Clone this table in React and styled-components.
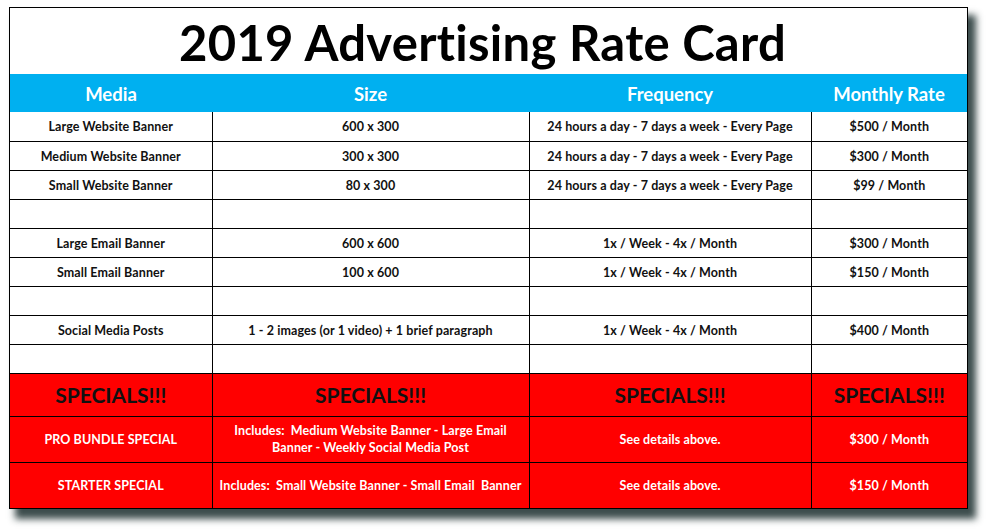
import styled, { createGlobalStyle } from 'styled-components';

const GlobalStyle = createGlobalStyle`
  html, body {
    margin: 0;
    padding: 0;
    background: #ffffff;
  }
  body {
    font-family: Lato, "Open Sans", sans-serif;
    color: #111111;
  }
`;

const rows = [
  ['Large Website Banner', '600 x 300', '24 hours a day - 7 days a week - Every Page', '$500 / Month'],
  ['Medium Website Banner', '300 x 300', '24 hours a day - 7 days a week - Every Page', '$300 / Month'],
  ['Small Website Banner', '80 x 300', '24 hours a day - 7 days a week - Every Page', '$99 / Month'],
  ['', '', '', ''],
  ['Large Email Banner', '600 x 600', '1x / Week - 4x / Month', '$300 / Month'],
  ['Small Email Banner', '100 x 600', '1x / Week - 4x / Month', '$150 / Month'],
  ['', '', '', ''],
  ['Social Media Posts', '1 - 2 images (or 1 video) + 1 brief paragraph', '1x / Week - 4x / Month', '$400 / Month'],
  ['', '', '', ''],
];

const specials = [
  [
    'PRO BUNDLE SPECIAL',
    'Includes:  Medium Website Banner - Large Email Banner - Weekly Social Media Post',
    'See details above.',
    '$300 / Month',
  ],
  [
    'STARTER SPECIAL',
    'Includes:  Small Website Banner - Small Email  Banner',
    'See details above.',
    '$150 / Month',
  ],
];

const App = () => {
  return (
    <>
      <GlobalStyle />
      <Page>
        <Card>
          <Title>2019 Advertising Rate Card</Title>
          <Sheet>
            <colgroup>
              <col style={{ width: 202 }} />
              <col style={{ width: 317 }} />
              <col style={{ width: 282 }} />
              <col style={{ width: 156 }} />
            </colgroup>
            <thead>
              <tr>
                <HeadCell>Media</HeadCell>
                <HeadCell>Size</HeadCell>
                <HeadCell>Frequency</HeadCell>
                <HeadCell>Monthly Rate</HeadCell>
              </tr>
            </thead>
            <tbody>
              {rows.map((r, i) => (
                <Row key={i}>
                  {r.map((c, j) => (
                    <Cell key={j}>{c}</Cell>
                  ))}
                </Row>
              ))}
              <SpecialHead>
                <Cell $red $big>SPECIALS!!!</Cell>
                <Cell $red $big>SPECIALS!!!</Cell>
                <Cell $red $big>SPECIALS!!!</Cell>
                <Cell $red $big>SPECIALS!!!</Cell>
              </SpecialHead>
              {specials.map((r, i) => (
                <SpecialRow key={i}>
                  {r.map((c, j) => (
                    <Cell key={j} $red $wrap={j === 1 && i === 0}>
                      {c}
                    </Cell>
                  ))}
                </SpecialRow>
              ))}
            </tbody>
          </Sheet>
        </Card>
      </Page>
    </>
  );
};

const Page = styled.div`
  padding: 7px 0 0 9px;
  width: 993px;
  height: 532px;
  box-sizing: border-box;
  overflow: hidden;
`;

const Card = styled.div`
  width: 959px;
  box-sizing: border-box;
  border: 1px solid #000;
  background: #fff;
  box-shadow: 7px 9px 7px 1px rgba(45, 62, 62, 0.92);
`;

const Title = styled.h1`
  margin: 0;
  height: 66px;
  display: flex;
  align-items: center;
  justify-content: center;
  font-family: Lato, sans-serif;
  font-weight: 700;
  font-size: 49px;
  letter-spacing: 0.3px;
  color: #000;
  padding: 1px 12px 0 0;
  box-sizing: border-box;
`;

const Sheet = styled.table`
  width: 100%;
  border-collapse: collapse;
  table-layout: fixed;
`;

const HeadCell = styled.th`
  height: 36px;
  background: #00b0f0;
  color: #fff;
  font-family: Lato, sans-serif;
  font-weight: 700;
  font-size: 18.5px;
  text-align: center;
  padding: 2px 0 0;
`;

const Row = styled.tr`
  height: 29px;
`;

const SpecialHead = styled.tr`
  height: 43px;
`;

const SpecialRow = styled.tr`
  height: 46px;
`;

const Cell = styled.td`
  border: 1px solid #000;
  padding: ${(p) => (p.$wrap ? '0 16px' : '1px 2px 0')};
  text-align: center;
  vertical-align: middle;
  white-space: ${(p) => (p.$wrap ? 'pre-wrap' : 'pre')};
  font-family: Lato, sans-serif;
  font-weight: 700;
  font-size: ${(p) => (p.$big ? '21px' : '12.5px')};
  letter-spacing: ${(p) => (p.$big ? '0' : '0.1px')};
  line-height: ${(p) => (p.$wrap ? '17px' : '1.2')};
  background: ${(p) => (p.$red ? '#ff0000' : '#fff')};
  color: ${(p) => (p.$red && !p.$big ? '#fff' : '#111')};
  tr:first-child > & {
    border-top: none;
  }
  tr > &:first-child {
    border-left: none;
  }
  tr > &:last-child {
    border-right: none;
  }
  tr:last-child > & {
    border-bottom: none;
  }
`;

export default App;
